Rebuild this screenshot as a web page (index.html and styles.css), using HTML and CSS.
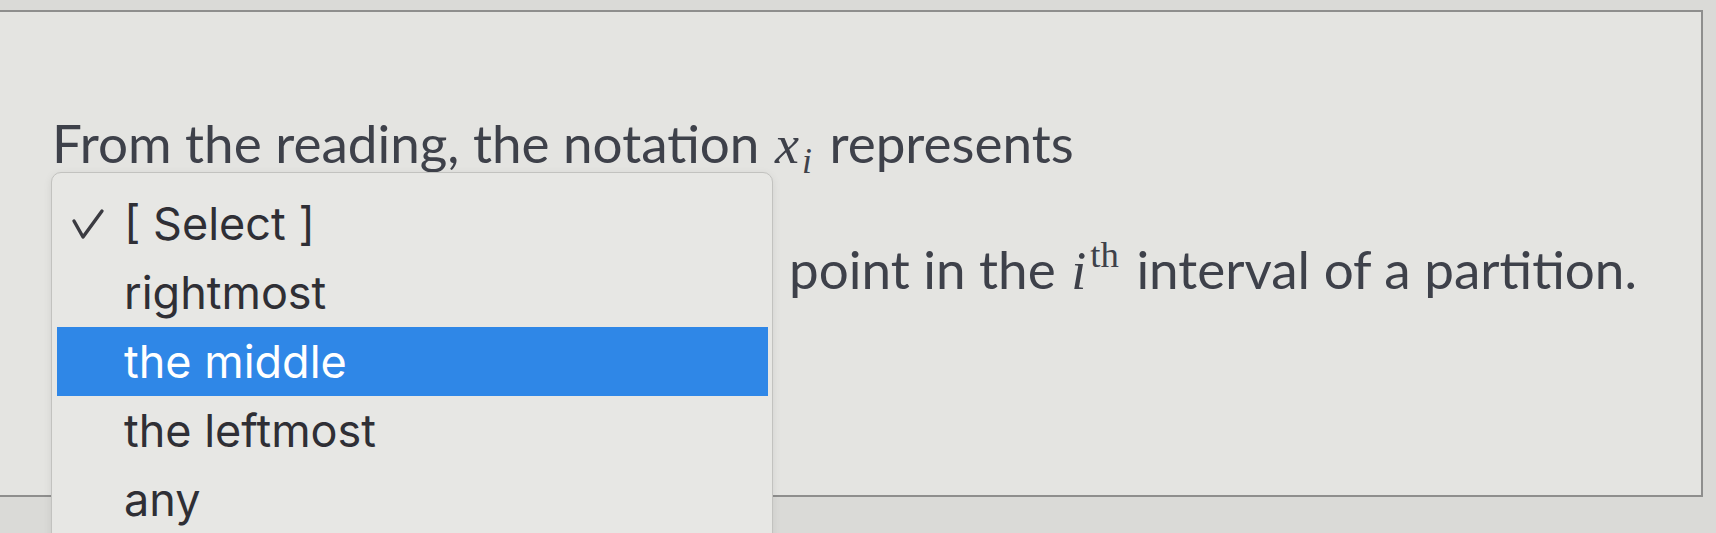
FILE: index.html
```html
<!DOCTYPE html>
<html lang="en">
<head>
    <meta charset="UTF-8">
    <meta name="viewport" content="width=device-width, initial-scale=1.0">
    <title>Quiz question</title>
    <link rel="stylesheet" href="styles.css">
</head>
<body>
    <div class="page">
        <div class="question">
            <p class="prompt">From the reading, the notation <span class="math"><i>x</i><sub>i</sub></span> represents</p>
            <div class="answer-row">
                <!-- Dropdown blank, shown with its option list open -->
                <div class="select">
                    <ul class="menu">
                        <li class="option checked">
                            <span class="check">
                                <svg width="34" height="32" viewBox="0 0 34 32"><polyline points="3,13 12,29 31,3" fill="none" stroke="#3b3b41" stroke-width="3.4" stroke-linecap="round" stroke-linejoin="round"/></svg>
                            </span>[ Select ]
                        </li>
                        <li class="option">rightmost</li>
                        <li class="option active">the middle</li>
                        <li class="option">the leftmost</li>
                        <li class="option">any</li>
                    </ul>
                </div>
                <p class="rest">point in the <span class="math"><i>i</i><sup>th</sup></span> interval of a partition.</p>
            </div>
        </div>
    </div>
</body>
</html>
```

FILE: styles.css
```css
html, body {
    margin: 0;
    height: 100%;
    overflow: hidden;
}
body {
    font-family: Lato, "Open Sans", sans-serif;
    background-color: #dadad7;
    color: #3e414a;
}
.page {
    padding-top: 10px;
}
.question {
    box-sizing: border-box;
    width: 1723px;
    height: 487px;
    margin-left: -20px;
    padding: 100px 0 0 70px;
    border: 2px solid #8e8e8d;
    background-color: #e4e4e1;
}
.prompt, .rest {
    margin: 0;
    font-size: 53px;
    line-height: 62px;
    white-space: nowrap;
}
.rest {
    padding-top: 66px;
}
.math {
    font-family: "Liberation Serif", "DejaVu Serif", serif;
    font-size: 54px;
    margin: 0 4px 0 2px;
}
.math i {
    font-style: italic;
}
.math sub {
    font-size: 0.66em;
    font-style: italic;
    vertical-align: -0.28em;
    line-height: 0;
    margin-left: 3px;
}
.math sup {
    font-size: 0.68em;
    vertical-align: 0.6em;
    line-height: 0;
    margin-left: 4px;
}
.answer-row {
    display: flex;
    gap: 15px;
    margin-top: -4px;
}
.select {
    position: relative;
    flex: 0 0 722px;
    height: 70px;
}
.menu {
    position: absolute;
    top: 0;
    left: -1px;
    box-sizing: border-box;
    width: 722px;
    margin: 0;
    padding: 16px 0 30px;
    list-style: none;
    background-color: #e7e7e4;
    border: 1px solid #c2c2bf;
    border-radius: 10px;
    box-shadow: 0 2px 8px rgba(0, 0, 0, 0.08);
}
.option {
    display: flex;
    align-items: center;
    height: 69px;
    margin: 0 4px 0 5px;
    padding-left: 67px;
    font-family: Inter, "Liberation Sans", sans-serif;
    font-size: 45px;
    color: #2f2f35;
}
.check {
    display: flex;
    width: 51px;
    margin-left: -53px;
    margin-right: 2px;
}
.option.active {
    background-color: #2f87e7;
    color: #fff;
}
```
